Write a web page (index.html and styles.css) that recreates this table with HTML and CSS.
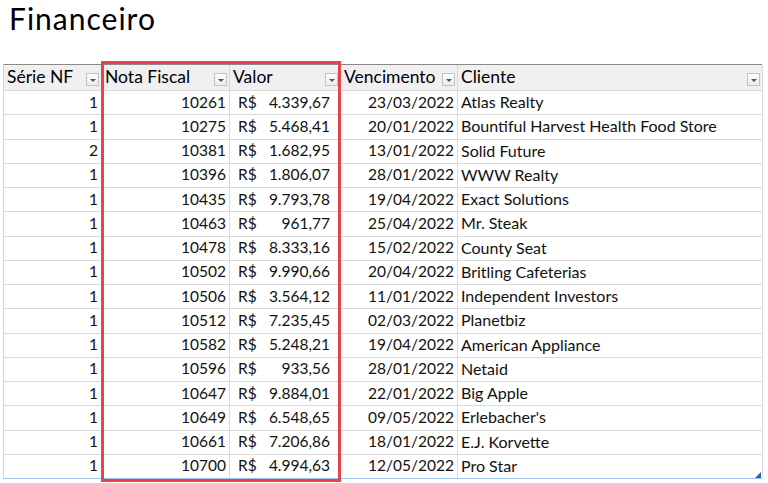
FILE: index.html
```html
<!DOCTYPE html>
<html lang="pt-BR">
<head>
<meta charset="utf-8">
<title>Financeiro</title>
<link rel="stylesheet" href="styles.css">
</head>
<body>
<h1 class="title">Financeiro</h1>
<div class="sheet">
  <div class="grid">
    <div class="hd"><span>Série NF</span><span class="fbtn"></span></div>
    <div class="hd"><span>Nota Fiscal</span><span class="fbtn"></span></div>
    <div class="hd"><span>Valor</span><span class="fbtn"></span></div>
    <div class="hd"><span>Vencimento</span><span class="fbtn"></span></div>
    <div class="hd"><span>Cliente</span><span class="fbtn"></span></div>

    <div class="c num">1</div><div class="c num">10261</div><div class="c cur"><span>R$</span><span>4.339,67</span></div><div class="c num">23/03/2022</div><div class="c">Atlas Realty</div>
    <div class="c num">1</div><div class="c num">10275</div><div class="c cur"><span>R$</span><span>5.468,41</span></div><div class="c num">20/01/2022</div><div class="c">Bountiful Harvest Health Food Store</div>
    <div class="c num">2</div><div class="c num">10381</div><div class="c cur"><span>R$</span><span>1.682,95</span></div><div class="c num">13/01/2022</div><div class="c">Solid Future</div>
    <div class="c num">1</div><div class="c num">10396</div><div class="c cur"><span>R$</span><span>1.806,07</span></div><div class="c num">28/01/2022</div><div class="c">WWW Realty</div>
    <div class="c num">1</div><div class="c num">10435</div><div class="c cur"><span>R$</span><span>9.793,78</span></div><div class="c num">19/04/2022</div><div class="c">Exact Solutions</div>
    <div class="c num">1</div><div class="c num">10463</div><div class="c cur"><span>R$</span><span>961,77</span></div><div class="c num">25/04/2022</div><div class="c">Mr. Steak</div>
    <div class="c num">1</div><div class="c num">10478</div><div class="c cur"><span>R$</span><span>8.333,16</span></div><div class="c num">15/02/2022</div><div class="c">County Seat</div>
    <div class="c num">1</div><div class="c num">10502</div><div class="c cur"><span>R$</span><span>9.990,66</span></div><div class="c num">20/04/2022</div><div class="c">Britling Cafeterias</div>
    <div class="c num">1</div><div class="c num">10506</div><div class="c cur"><span>R$</span><span>3.564,12</span></div><div class="c num">11/01/2022</div><div class="c">Independent Investors</div>
    <div class="c num">1</div><div class="c num">10512</div><div class="c cur"><span>R$</span><span>7.235,45</span></div><div class="c num">02/03/2022</div><div class="c">Planetbiz</div>
    <div class="c num">1</div><div class="c num">10582</div><div class="c cur"><span>R$</span><span>5.248,21</span></div><div class="c num">19/04/2022</div><div class="c">American Appliance</div>
    <div class="c num">1</div><div class="c num">10596</div><div class="c cur"><span>R$</span><span>933,56</span></div><div class="c num">28/01/2022</div><div class="c">Netaid</div>
    <div class="c num">1</div><div class="c num">10647</div><div class="c cur"><span>R$</span><span>9.884,01</span></div><div class="c num">22/01/2022</div><div class="c">Big Apple</div>
    <div class="c num">1</div><div class="c num">10649</div><div class="c cur"><span>R$</span><span>6.548,65</span></div><div class="c num">09/05/2022</div><div class="c">Erlebacher's</div>
    <div class="c num">1</div><div class="c num">10661</div><div class="c cur"><span>R$</span><span>7.206,86</span></div><div class="c num">18/01/2022</div><div class="c">E.J. Korvette</div>
    <div class="c num">1</div><div class="c num">10700</div><div class="c cur"><span>R$</span><span>4.994,63</span></div><div class="c num">12/05/2022</div><div class="c">Pro Star</div>
  </div>
  <span class="resize"></span>
  <div class="highlight"></div>
</div>
</body>
</html>
```

FILE: styles.css
```css
html, body {
  margin: 0;
  padding: 0;
  background: #ffffff;
}

body {
  font-family: Lato, "Liberation Sans", sans-serif;
  color: #111;
  width: 768px;
  height: 483px;
  overflow: hidden;
}

.title {
  margin: 0;
  padding: 0 0 0 9px;
  height: 64px;
  font-size: 30px;
  letter-spacing: 1px;
  font-weight: 400;
  line-height: 36px;
  color: #000;
}

.sheet {
  position: relative;
  margin-left: 3px;
  width: 759px;
}

.grid {
  display: grid;
  grid-template-columns: 98px 128px 111px 117px 305px;
  grid-auto-rows: 24.25px;
  grid-template-rows: 25px;
  border-left: 1px solid #d4d4d4;
  border-top: 1px solid #8a8a8a;
  border-bottom: 1px solid #9fc3e8;
  font-size: 16px;
}

.hd {
  display: flex;
  align-items: center;
  justify-content: space-between;
  background: #f0f0f0;
  border-right: 1px solid #d8d8d8;
  padding: 0 2px 3px 3px;
  color: #000;
  font-size: 17.5px;
}

.fbtn {
  position: relative;
  width: 13px;
  height: 13px;
  box-sizing: border-box;
  border: 1px solid #c2c2c2;
  background: linear-gradient(#fdfdfd, #ececec);
  margin-top: 6px;
  flex: none;
}

.fbtn::after {
  content: "";
  position: absolute;
  left: 3px;
  top: 5px;
  border-left: 3px solid transparent;
  border-right: 3px solid transparent;
  border-top: 3px solid #555;
}

.c {
  display: flex;
  align-items: center;
  padding: 0 3px 2px 3px;
  border-right: 1px solid #dadada;
  border-top: 1px solid #dadada;
  white-space: nowrap;
  overflow: hidden;
}

.c.num,
.c.cur {
  font-size: 15.5px;
}

.c.num {
  justify-content: flex-end;
}

.c.cur {
  justify-content: space-between;
  padding: 0 10px 2px 8px;
}

.resize {
  position: absolute;
  right: 1px;
  bottom: 1px;
  width: 0;
  height: 0;
  border-left: 6px solid transparent;
  border-bottom: 6px solid #2f5fa8;
}

.highlight {
  position: absolute;
  left: 98px;
  top: -3px;
  width: 240px;
  height: 421px;
  box-sizing: border-box;
  border: 3px solid #e8424c;
  pointer-events: none;
}
```
